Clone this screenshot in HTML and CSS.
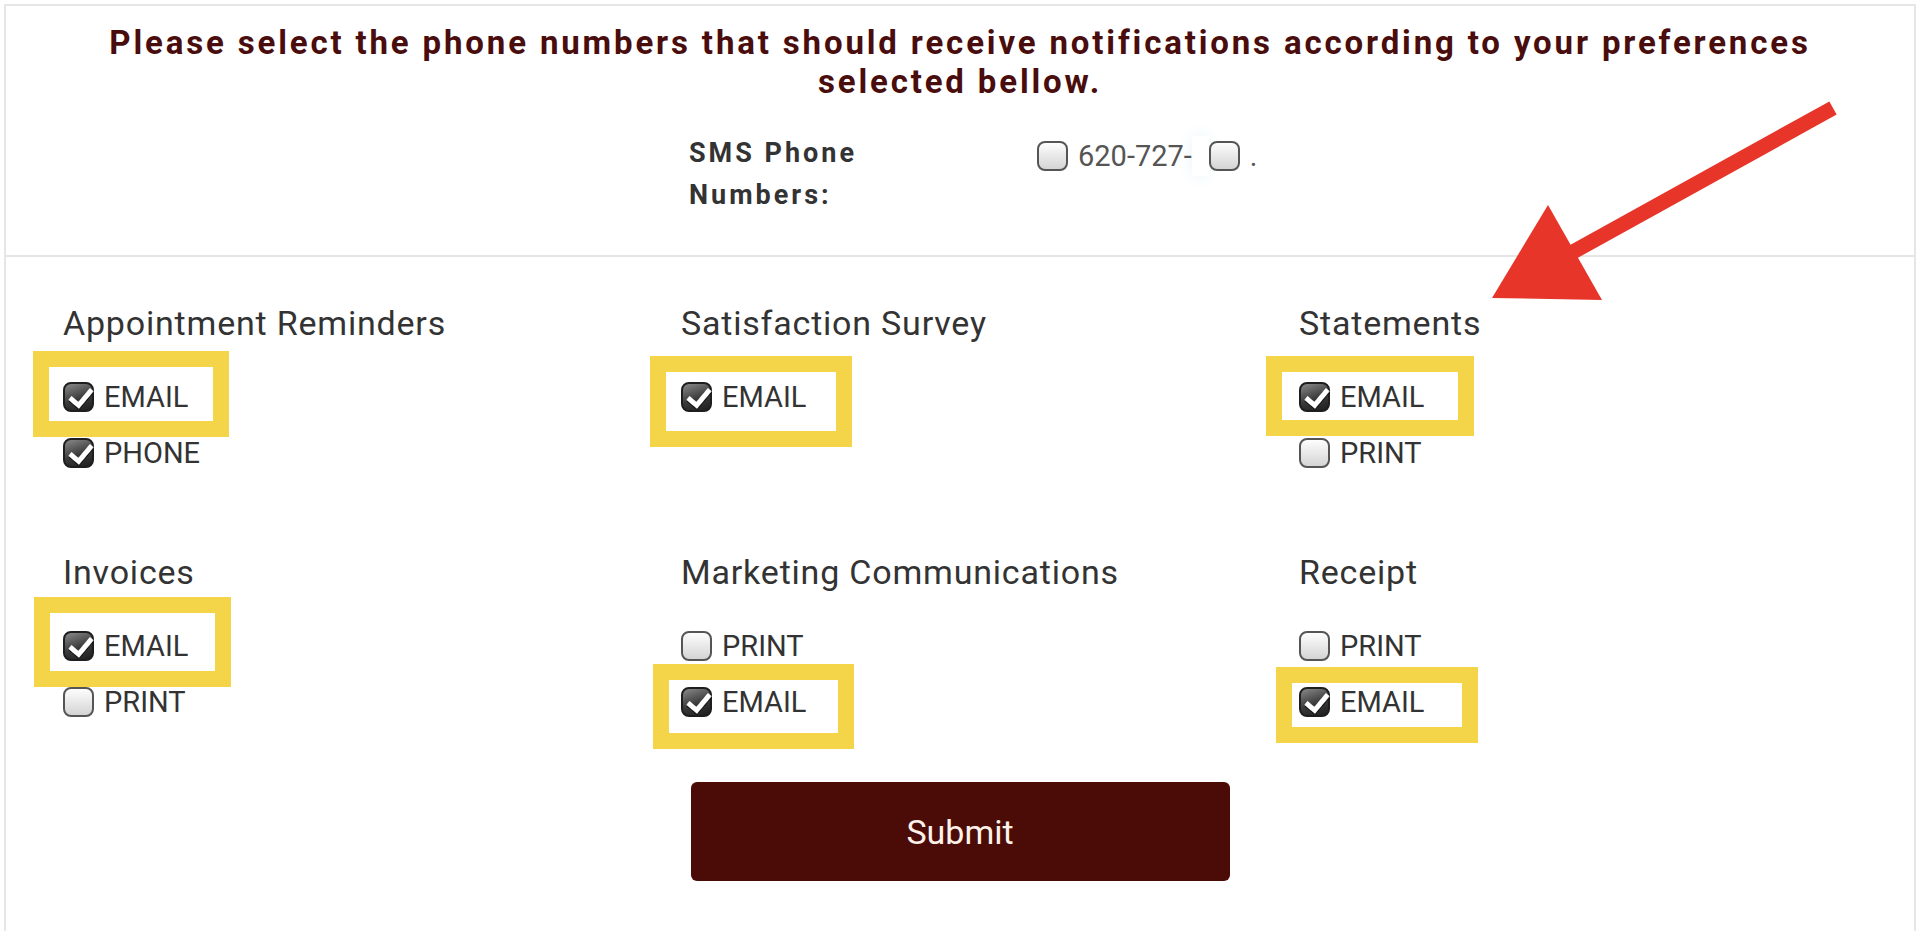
FILE: index.html
```html
<!DOCTYPE html>
<html>
<head>
  <title>Notification Preferences</title>
  <link rel="stylesheet" href="styles.css">
</head>
<body>

  <div class="phones">
    <h2>Please select the phone numbers that should receive notifications according to your preferences selected bellow.</h2>
    <div class="sms-row">
      <div class="sms-label"><label>SMS Phone Numbers:</label></div>
      <div class="sms-opts">
        <label class="opt"><input type="checkbox"> 620-727-</label>
        <span class="redacted"></span>
        <label class="opt"><input type="checkbox"> .</label>
      </div>
    </div>
  </div>

  <div class="prefs">
    <div class="grid">
      <div class="group">
        <h3>Appointment Reminders</h3>
        <label class="opt hl"><input type="checkbox" checked> EMAIL</label>
        <label class="opt"><input type="checkbox" checked> PHONE</label>
      </div>
      <div class="group">
        <h3>Satisfaction Survey</h3>
        <label class="opt hl hl-survey"><input type="checkbox" checked> EMAIL</label>
      </div>
      <div class="group">
        <h3>Statements</h3>
        <label class="opt hl hl-statement"><input type="checkbox" checked> EMAIL</label>
        <label class="opt"><input type="checkbox"> PRINT</label>
      </div>
      <div class="group">
        <h3>Invoices</h3>
        <label class="opt hl hl-invoice"><input type="checkbox" checked> EMAIL</label>
        <label class="opt"><input type="checkbox"> PRINT</label>
      </div>
      <div class="group">
        <h3>Marketing Communications</h3>
        <label class="opt"><input type="checkbox"> PRINT</label>
        <label class="opt hl hl-market"><input type="checkbox" checked> EMAIL</label>
      </div>
      <div class="group">
        <h3>Receipt</h3>
        <label class="opt"><input type="checkbox"> PRINT</label>
        <label class="opt hl hl-receipt"><input type="checkbox" checked> EMAIL</label>
      </div>
    </div>

    <button>Submit</button>
  </div>

  <!-- annotation arrow drawn over the form -->
  <svg class="arrow" viewBox="0 0 1920 931" width="1920" height="931">
    <line x1="1833" y1="108" x2="1562" y2="258" stroke="#e8352a" stroke-width="15"/>
    <polygon points="1548,205 1492,298 1602,300" fill="#e8352a"/>
  </svg>

</body>
</html>
```

FILE: styles.css
```css
body {
  margin: 0;
  font-family: Roboto, "Liberation Sans", sans-serif;
  color: #333;
  background: #fff;
  position: relative;
  overflow: hidden;
}

.phones {
  margin: 4px 4px 0;
  border: 2px solid #e6e6e6;
  height: 232px;
  padding-top: 17px;
}

.phones h2 {
  max-width: 1760px;
  margin: 0 auto;
  font-size: 33px;
  line-height: 39px;
  font-weight: 700;
  letter-spacing: 2.85px;
  color: #4a0d0d;
  text-align: center;
}

.sms-row {
  display: flex;
  width: 542px;
  margin: 31px auto 0;
}

.sms-label {
  width: 348px;
  flex-shrink: 0;
}

.sms-label label {
  display: block;
  width: 200px;
  font-size: 27px;
  line-height: 42px;
  font-weight: 700;
  letter-spacing: 3px;
  color: #333;
}

.sms-opts {
  display: flex;
  align-items: flex-start;
  white-space: nowrap;
}

.sms-opts .opt {
  font-size: 29px;
  color: #555;
  height: auto;
  line-height: 34px;
  margin-top: 7px;
}

.sms-opts input {
  margin-right: 8px;
}

.redacted {
  width: 17px;
  height: 40px;
  margin-top: 4px;
  box-shadow: 0 0 14px rgba(205, 232, 240, 0.45);
}

.prefs {
  margin: 0 4px;
  border: 2px solid #e6e6e6;
  border-top: none;
  min-height: 700px;
  padding-top: 45px;
}

.grid {
  display: grid;
  grid-template-columns: repeat(3, 618px);
  row-gap: 70px;
  padding-left: 57px;
}

.group h3 {
  margin: 0 0 25px;
  font-size: 34px;
  line-height: 42px;
  font-weight: 400;
  letter-spacing: 0.8px;
  color: #333;
}

.opt {
  display: flex;
  align-items: center;
  width: fit-content;
  height: 56px;
  font-size: 29px;
  color: #333;
  position: relative;
}

.opt input {
  appearance: none;
  -webkit-appearance: none;
  width: 31px;
  height: 30px;
  margin: 0 10px 0 0;
  border: 2px solid #555;
  border-radius: 8px;
  background: linear-gradient(#fdfdfd, #d4d4d4);
  position: relative;
  flex-shrink: 0;
  box-sizing: border-box;
}

.opt input:checked {
  border-color: #1e1e1e;
  background: linear-gradient(160deg, #8a8a8a, #3a3a3a 55%, #1e1e1e);
}

.opt input:checked::after {
  content: '';
  position: absolute;
  left: 9px;
  top: 0;
  width: 9px;
  height: 18px;
  border: solid #fff;
  border-width: 0 5px 5px 0;
  border-radius: 1px;
  transform: rotate(40deg);
  filter: drop-shadow(1px 1px 0 #111);
}

/* yellow highlight marks */
.opt.hl::after {
  content: '';
  position: absolute;
  left: -30px;
  top: -18px;
  width: 196px;
  height: 86px;
  border: 16px solid #f4d448;
  box-sizing: border-box;
}

.opt.hl-survey::after {
  left: -31px;
  top: -13px;
  width: 202px;
  height: 91px;
}

.opt.hl-statement::after {
  left: -33px;
  top: -13px;
  width: 208px;
  height: 80px;
}

.opt.hl-invoice::after {
  left: -29px;
  top: -21px;
  width: 197px;
  height: 90px;
}

.opt.hl-market::after {
  left: -28px;
  top: -10px;
  width: 201px;
  height: 85px;
}

.opt.hl-receipt::after {
  left: -23px;
  top: -7px;
  width: 202px;
  height: 76px;
}

button {
  display: block;
  width: 539px;
  height: 99px;
  margin: 52px auto 0;
  background-color: #4b0c07;
  color: #fdf2ea;
  border: none;
  border-radius: 6px;
  font-family: Roboto, "Liberation Sans", sans-serif;
  font-size: 34px;
  cursor: pointer;
}

.arrow {
  position: absolute;
  top: 0;
  left: 0;
  pointer-events: none;
}
```
